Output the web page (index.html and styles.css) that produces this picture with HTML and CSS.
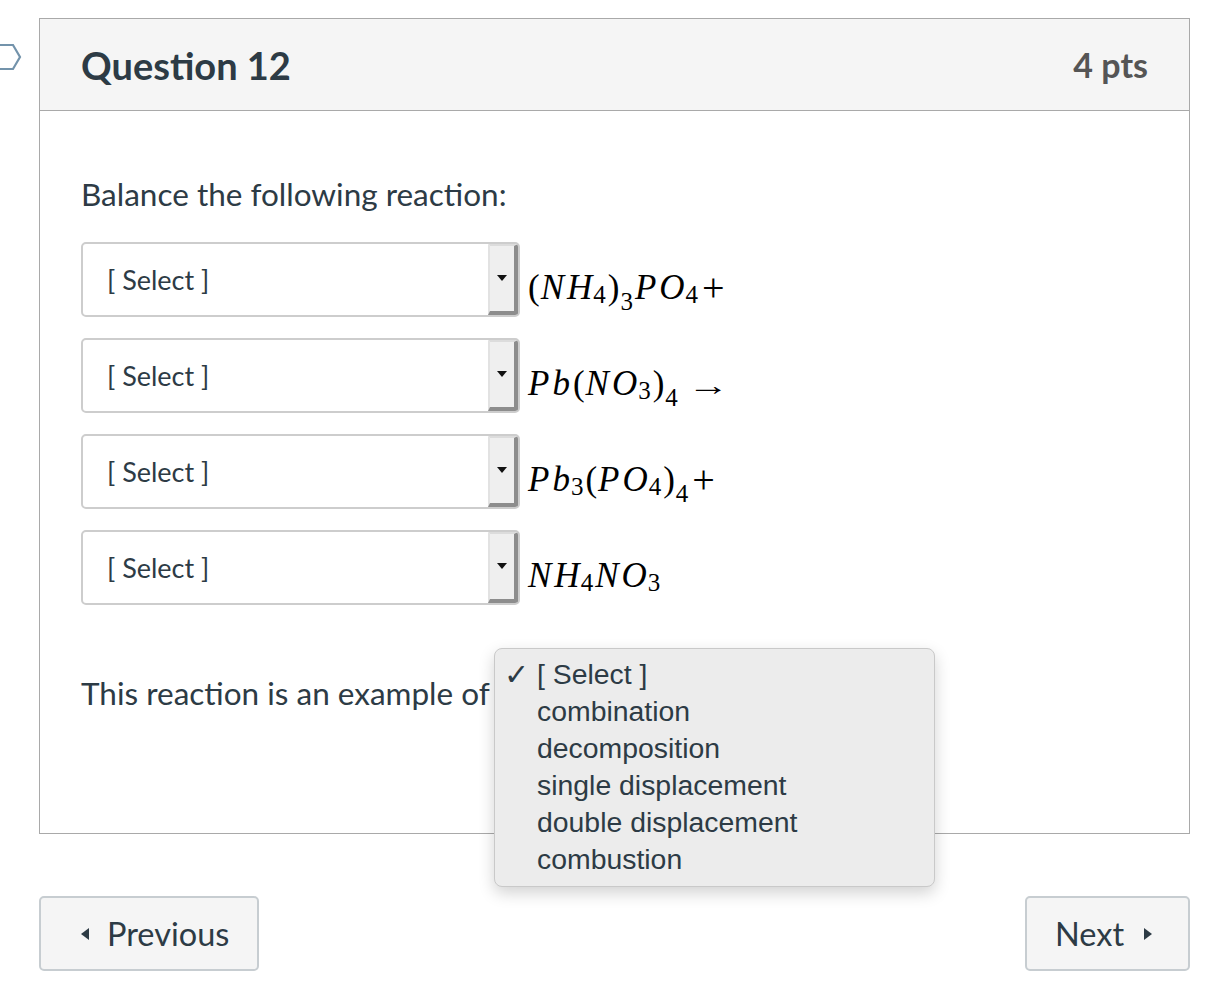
FILE: index.html
```html
<!DOCTYPE html>
<html>
<head>
<meta charset="utf-8">
<link rel="stylesheet" href="styles.css">
</head>
<body>
<div class="flag">
  <svg width="24" height="40" viewBox="0 0 24 40"><path d="M-4 8 H13 L20 20 L13 32 H-4" fill="none" stroke="#7393ab" stroke-width="2.2"/></svg>
</div>
<div class="page">
  <div class="card">
    <div class="card-header">
      <h2 class="q-title">Question 12</h2>
      <span class="pts">4 pts</span>
    </div>
    <div class="card-body">
      <p class="prompt">Balance the following reaction:</p>
      <div class="rows">
        <div class="row">
          <div class="select"><span class="sel-text">[ Select ]</span><span class="sel-btn"><span class="tri"></span></span></div>
          <span class="math"><span class="up">(</span><i>NH</i><sub>4</sub><span class="up">)</span><sub class="low">3</sub><i>PO</i><sub>4</sub><span class="up op">+</span></span>
        </div>
        <div class="row">
          <div class="select"><span class="sel-text">[ Select ]</span><span class="sel-btn"><span class="tri"></span></span></div>
          <span class="math"><i>Pb</i><span class="up">(</span><i>NO</i><sub>3</sub><span class="up">)</span><sub class="low">4</sub><span class="up arrow">→</span></span>
        </div>
        <div class="row">
          <div class="select"><span class="sel-text">[ Select ]</span><span class="sel-btn"><span class="tri"></span></span></div>
          <span class="math"><i>Pb</i><sub>3</sub><span class="up">(</span><i>PO</i><sub>4</sub><span class="up">)</span><sub class="low">4</sub><span class="up op">+</span></span>
        </div>
        <div class="row">
          <div class="select"><span class="sel-text">[ Select ]</span><span class="sel-btn"><span class="tri"></span></span></div>
          <span class="math"><i>NH</i><sub>4</sub><i>NO</i><sub>3</sub></span>
        </div>
      </div>
      <p class="example">This reaction is an example of</p>
      <ul class="popup">
        <li class="checked"><span class="check">✓</span>[ Select ]</li>
        <li>combination</li>
        <li>decomposition</li>
        <li>single displacement</li>
        <li>double displacement</li>
        <li>combustion</li>
      </ul>
    </div>
  </div>
  <div class="nav">
    <button class="btn prev"><span class="ltri"></span>Previous</button>
    <button class="btn next">Next<span class="rtri"></span></button>
  </div>
</div>
</body>
</html>
```

FILE: styles.css
```css
html, body {
  margin: 0;
  padding: 0;
  background: #ffffff;
}
body {
  font-family: Lato, "Open Sans", sans-serif;
  color: #2d3b45;
  position: relative;
}
.flag {
  position: absolute;
  left: 0;
  top: 37px;
}
.page {
  padding: 18px 31px 0 39px;
}
.card {
  width: 1151px;
  box-sizing: border-box;
  border: 1px solid #a9a9a9;
}
.card-header {
  height: 92px;
  box-sizing: border-box;
  background: #f5f5f5;
  border-bottom: 1px solid #a9a9a9;
  display: flex;
  align-items: center;
  justify-content: space-between;
  padding: 0 41px;
}
.q-title {
  margin: 0;
  font-size: 38px;
  font-weight: 700;
  color: #2d3b45;
}
.pts {
  font-size: 34px;
  font-weight: 700;
  color: #555555;
}
.card-body {
  position: relative;
  padding: 63px 41px 120px 41px;
}
.prompt, .example {
  margin: 0;
  font-size: 31.5px;
  line-height: 40px;
}
.rows {
  margin-top: 28px;
  display: flex;
  flex-direction: column;
  gap: 21px;
}
.row {
  display: flex;
  align-items: center;
  gap: 8px;
  height: 75px;
}
.select {
  width: 439px;
  height: 75px;
  box-sizing: border-box;
  border: 2px solid #cdcdcd;
  border-radius: 5px;
  background: #fff;
  display: flex;
  align-items: stretch;
  justify-content: space-between;
}
.sel-text {
  font-size: 27px;
  line-height: 71px;
  padding-left: 24px;
}
.sel-btn {
  width: 30px;
  box-sizing: border-box;
  background: #efefef;
  border-left: 2px solid #e2e2e2;
  border-top: 2px solid #dcdcdc;
  border-right: 4px solid #8d8d8d;
  border-bottom: 4px solid #8d8d8d;
  border-radius: 0 3px 3px 0;
  display: flex;
  align-items: center;
  justify-content: center;
}
.tri {
  width: 0;
  height: 0;
  border-left: 5px solid transparent;
  border-right: 5px solid transparent;
  border-top: 6px solid #111;
  margin-top: -1px;
}
.math {
  font-family: "Liberation Serif", "DejaVu Serif", serif;
  font-size: 35px;
  color: #000;
  margin-top: 16px;
  white-space: nowrap;
}
.math i {
  font-style: italic;
  letter-spacing: 3px;
}
.math .up {
  font-style: normal;
  margin-right: 1px;
}
.math sub {
  font-size: 25px;
  vertical-align: -4px;
  line-height: 0;
  margin-left: -2px;
  margin-right: 2px;
}
.math sub.low {
  vertical-align: -11px;
  margin-left: 0;
}
.math .op {
  display: inline-block;
  margin-left: 2px;
  font-size: 40px;
  line-height: 0;
  vertical-align: -2px;
}
.math .arrow {
  display: inline-block;
  margin-left: 14px;
  transform: scaleX(1.5);
  font-size: 28px;
}
.example {
  margin-top: 68px;
}
.popup {
  position: absolute;
  left: 454px;
  top: 537px;
  width: 441px;
  height: 239px;
  box-sizing: border-box;
  margin: 0;
  padding: 7px 0 0 42px;
  list-style: none;
  background: #ececec;
  border: 1px solid #c9c9c9;
  border-radius: 8px;
  box-shadow: 0 6px 16px rgba(0, 0, 0, 0.18);
  font-family: "Liberation Sans", Arial, sans-serif;
  font-size: 28.4px;
  line-height: 37px;
  color: #2d3b45;
}
.popup li {
  position: relative;
}
.check {
  position: absolute;
  left: -33px;
  top: 0;
  font-family: "DejaVu Sans", sans-serif;
  font-size: 30px;
  font-weight: 700;
}
.nav {
  margin-top: 62px;
  display: flex;
  justify-content: space-between;
  width: 1151px;
}
.btn {
  height: 75px;
  box-sizing: border-box;
  background: #f5f5f5;
  border: 2px solid #c7cdd1;
  border-radius: 5px;
  font-family: Lato, sans-serif;
  font-size: 32.5px;
  color: #2d3b45;
  display: flex;
  align-items: center;
  padding: 0;
}
.prev {
  width: 220px;
  padding-left: 40px;
}
.next {
  width: 165px;
  padding-left: 28px;
}
.ltri {
  width: 0;
  height: 0;
  border-top: 6px solid transparent;
  border-bottom: 6px solid transparent;
  border-right: 8px solid #2d3b45;
  margin-right: 18px;
}
.rtri {
  width: 0;
  height: 0;
  border-top: 6px solid transparent;
  border-bottom: 6px solid transparent;
  border-left: 8px solid #2d3b45;
  margin-left: 20px;
}
```
